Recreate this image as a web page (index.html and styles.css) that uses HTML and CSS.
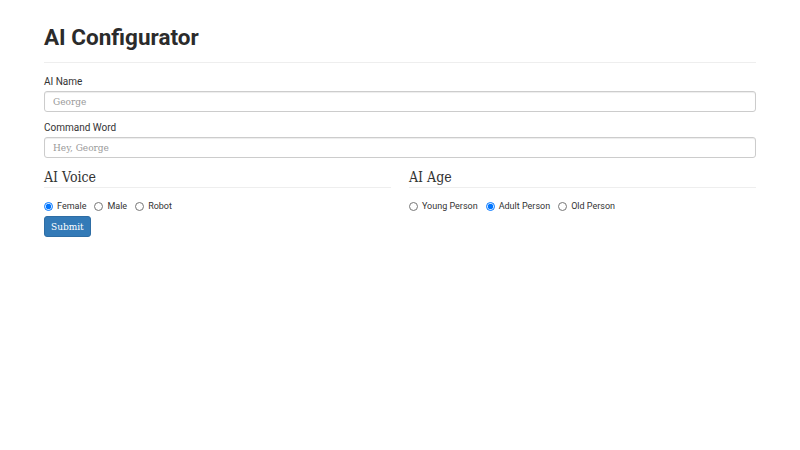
FILE: index.html
```html
<!DOCTYPE html>
<html>
<head>
<meta charset="utf-8">
<link rel="stylesheet" href="styles.css">
</head>
<body>
<div class="container">
  <h1 class="title">AI Configurator</h1>
  <form class="form">
    <div class="field">
      <label class="label">AI Name</label>
      <input class="input" type="text" placeholder="George">
    </div>
    <div class="field">
      <label class="label">Command Word</label>
      <input class="input" type="text" placeholder="Hey, George">
    </div>
    <div class="columns">
      <div class="col">
        <h3 class="section">AI Voice</h3>
        <div class="radios">
          <label class="radio"><input type="radio" name="voice" checked> Female</label>
          <label class="radio"><input type="radio" name="voice"> Male</label>
          <label class="radio"><input type="radio" name="voice"> Robot</label>
        </div>
        <button class="btn" type="button">Submit</button>
      </div>
      <div class="col">
        <h3 class="section">AI Age</h3>
        <div class="radios">
          <label class="radio"><input type="radio" name="age"> Young Person</label>
          <label class="radio"><input type="radio" name="age" checked> Adult Person</label>
          <label class="radio"><input type="radio" name="age"> Old Person</label>
        </div>
      </div>
    </div>
  </form>
</div>
</body>
</html>
```
FILE: styles.css
```css
html, body { margin: 0; padding: 0; background: #fff; }
body { font-family: Roboto, "Liberation Sans", sans-serif; color: #333; }
.container { padding: 0 44px; }
.title {
  margin: 0;
  padding-top: 23px;
  font-size: 22.5px;
  font-weight: 700;
  line-height: 28px;
  color: #2b2b2b;
  padding-bottom: 11px;
  border-bottom: 1px solid #eee;
}
.form { padding-top: 13px; }
.field { margin-bottom: 10px; }
.label { display: block; font-size: 10px; line-height: 12px; margin-bottom: 3px; color: #333; }
.input {
  display: block; box-sizing: border-box; width: 100%; height: 21px;
  border: 1px solid #ccc; border-radius: 3px; padding: 0 8px;
  font-family: "DejaVu Serif", serif; font-stretch: condensed; font-size: 10px; color: #555;
  box-shadow: inset 0 1px 1px rgba(0,0,0,.075);
}
.input::placeholder { color: #999; }
.columns { display: grid; grid-template-columns: 1fr 1fr; column-gap: 18px; }
.section {
  margin: 0; font-family: "DejaVu Serif", serif; font-stretch: condensed; font-weight: 400;
  font-size: 14px; line-height: 18px; color: #333;
  padding-bottom: 1px; border-bottom: 1px solid #eee;
}
.radios { display: flex; gap: 8px; margin-top: 12px; font-size: 9px; line-height: 13px; }
.radio { display: flex; align-items: center; gap: 4px; }
.radio input { margin: 0; width: 9px; height: 9px; }
.btn {
  display: block;
  margin-top: 3px; background: #337ab7; color: #fff; border: 1px solid #2e6da4;
  border-radius: 3px; font-family: "DejaVu Serif", serif; font-stretch: condensed; font-size: 10px;
  height: 21px; padding: 0 6px;
}
```
